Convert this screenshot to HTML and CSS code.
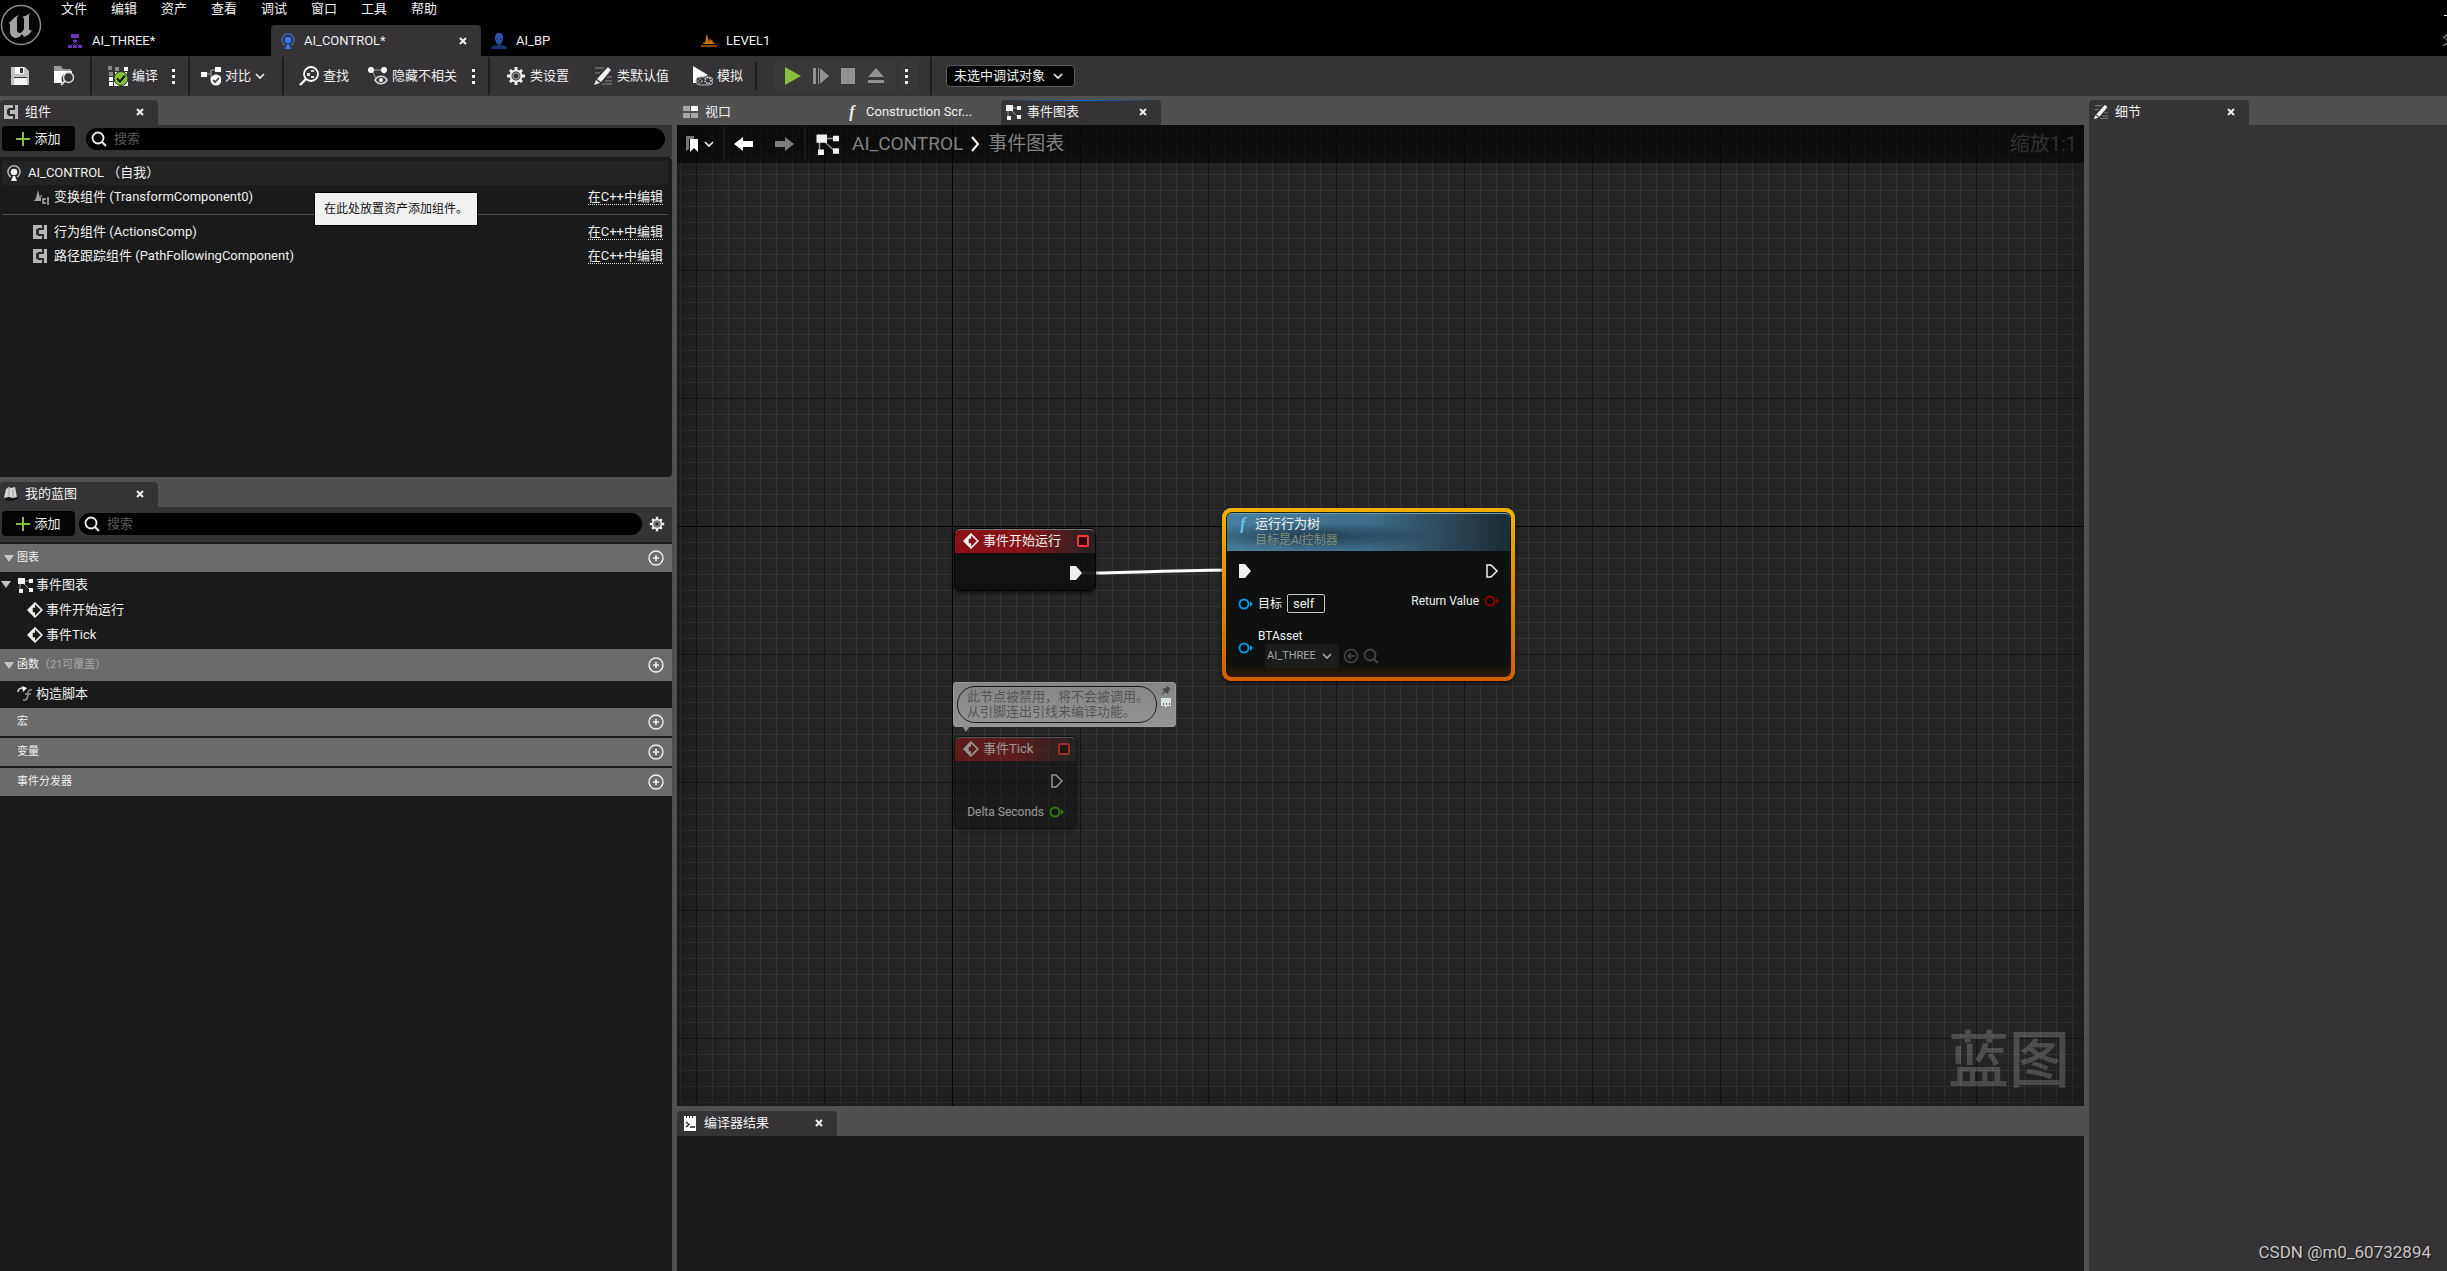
FILE: index.html
```html
<!DOCTYPE html>
<html lang="zh-CN">
<head>
    <meta charset="utf-8">
    <meta name="viewport" content="width=device-width, initial-scale=1.0">
    <title>AI_CONTROL</title>
    <link rel="stylesheet" href="styles.css">
</head>

<body>
    <!-- icon sprite -->
    <svg class="sprite" aria-hidden="true">
        <symbol id="i-close" viewBox="0 0 8 8"><path d="M1 1l6 6M7 1L1 7" stroke="currentColor" stroke-width="2" fill="none"/></symbol>
        <symbol id="i-chevron" viewBox="0 0 10 8"><path d="M1 2l4 4 4-4" stroke="currentColor" stroke-width="1.600" fill="none"/></symbol>
        <symbol id="i-dots" viewBox="0 0 4 16"><path d="M0 1h3v3H0zM0 7h3v3H0zM0 13h3v3H0z" fill="currentColor"/></symbol>
        <symbol id="i-plus" viewBox="0 0 14 14"><path d="M7 0v14M0 7h14" stroke="currentColor" stroke-width="2"/></symbol>
        <symbol id="i-search" viewBox="0 0 16 16"><circle cx="7" cy="7" r="5.500" stroke="currentColor" stroke-width="1.800" fill="none"/><path d="M11 11l4 4" stroke="currentColor" stroke-width="2"/></symbol>
        <symbol id="i-circle-plus" viewBox="0 0 16 16"><circle cx="8" cy="8" r="7" stroke="currentColor" stroke-width="1.4" fill="none"/><path d="M8 5v6M5 8h6" stroke="currentColor" stroke-width="1.6"/></symbol>
        <symbol id="i-gear" viewBox="0 0 20 20">
            <path d="M10 1v4M10 15v4M1 10h4M15 10h4M4 4l2.500 2.500M13.500 13.500L16 16M16 4l-2.500 2.500M6.500 13.500L4 16" stroke="currentColor" stroke-width="3"/>
            <circle cx="10" cy="10" r="5.500" stroke="currentColor" stroke-width="2" fill="none"/>
            <circle cx="10" cy="10" r="3" stroke="#8a8a8a" stroke-width="1.500" fill="none"/>
        </symbol>
        <symbol id="i-graph" viewBox="0 0 16 16">
            <path d="M5 4h8M5 5l8 8M3 6v7" stroke="#9a9a9a" fill="none"/>
            <path d="M1 1h7v6H1zM12 2h4v4h-4zM12 11h4v4h-4zM2 12h4v4H2z" fill="currentColor"/>
        </symbol>
        <symbol id="i-pencil" viewBox="0 0 20 20">
            <path d="M2 2h9M2 7h5M14 11h5M12 15h7M9 18h10" stroke="#8c8c8c" stroke-width="1"/>
            <path d="M15 1l3 3L8 16l-4-3z" fill="currentColor"/><path d="M3 14l4 3-6 2z" fill="currentColor"/>
        </symbol>
        <symbol id="i-comp" viewBox="0 0 14 14">
            <path d="M0 0h14v14H0z" fill="#b8b8b8"/>
            <path d="M11 0H9v3H5L3 5v4l2 2h4v3h2V9H6V5h5z" fill="#2a292b"/>
        </symbol>
        <symbol id="i-controller" viewBox="0 0 14 16">
            <path d="M4 12a6 6 0 1 1 6 0" stroke="currentColor" stroke-width="1.600" fill="none" opacity=".7"/>
            <circle cx="7" cy="7" r="3.300" fill="currentColor"/><path d="M6 11h2l2 5H4z" fill="currentColor"/>
        </symbol>
        <symbol id="i-event" viewBox="0 0 14 14">
            <path d="M7 1l6 6-6 6-6-6z" stroke="currentColor" stroke-width="1.500" fill="none"/>
            <path d="M7 1v4H5v4h2v4L1 7z" fill="currentColor"/>
        </symbol>
        <symbol id="i-tri" viewBox="0 0 10 7"><path d="M0 0h10L5 7z" fill="#c4c4c4"/></symbol>
        <symbol id="i-exec" viewBox="0 0 14 16"><path d="M1 1h6l6 7-6 7H1z" fill="currentColor"/></symbol>
        <symbol id="i-exec-out" viewBox="0 0 14 16"><path d="M2 2h4l6 6-6 6H2z" fill="none" stroke="currentColor" stroke-width="1.500"/></symbol>
        <symbol id="i-pin" viewBox="0 0 15 12"><circle cx="6" cy="6" r="4.500" stroke="currentColor" stroke-width="2" fill="#070b09"/><path d="M12 3l3 3-3 3z" fill="currentColor"/></symbol>
    </svg>

    <header class="titlebar">
        <svg class="logo" viewBox="0 0 42 42" role="img" aria-label="Unreal">
            <circle cx="21" cy="21" r="19.500" fill="#060606" stroke="#8e8e8e" stroke-width="1.500"/>
            <path d="M9 21c2-5 5-8 10-10-1 1-2 2-2 4v11c0 2 1 3 3 3 2-1 3-2 4-4V15c0-1-1-2-2-2 3-1 6-2 8-4-1 2-1 3-1 5v10c0 2 1 3 3 2-2 4-5 6-8 7l-2-3c-2 3-4 4-7 4-3-1-5-3-5-6V18c0-1-1-1-1 3z" fill="#a2a4a2"/>
        </svg>
        <div class="titlebar-main">
            <nav class="menu">
                <button>文件</button>
                <button>编辑</button>
                <button>资产</button>
                <button>查看</button>
                <button>调试</button>
                <button>窗口</button>
                <button>工具</button>
                <button>帮助</button>
            </nav>
            <div class="doc-tabs">
                <div class="doc-tab">
                    <svg width="16" height="16" viewBox="0 0 16 16"><path d="M8 4v10M4 13l4-4 4 4" stroke="#4d2a8a" fill="none"/><path d="M4 1h8v4H4zM6 7h4v2H6zM1 12h4v3H1zM6 12h4v3H6zM11 12h4v3h-4z" fill="#6a35b5"/></svg>
                    <span>AI_THREE*</span>
                </div>
                <div class="doc-tab active">
                    <svg class="blue" width="14" height="16"><use href="#i-controller"/></svg>
                    <span>AI_CONTROL*</span>
                    <button class="close" aria-label="关闭"><svg width="8" height="8"><use href="#i-close"/></svg></button>
                </div>
                <div class="doc-tab">
                    <svg width="16" height="16" viewBox="0 0 16 16"><path d="M0 16c0-3 3-4 8-4s8 1 8 4z" fill="#173268"/><path d="M8 0c3 0 4 2 4 5s-2 7-4 7-4-4-4-7 1-5 4-5z" fill="#2854b0"/><path d="M5 6h2M9 6h2M7 10h2" stroke="#12275a"/></svg>
                    <span>AI_BP</span>
                </div>
                <div class="doc-tab">
                    <svg width="16" height="14" viewBox="0 0 16 14"><path d="M2 10l1-2 1 1 1-6 1-3 2 8 1-4 1 3 1-2 1 4 1-1 1 2z" fill="#c47600"/><path d="M0 11h16v2H0z" fill="#7c4a00"/></svg>
                    <span>LEVEL1</span>
                </div>
            </div>
        </div>
        <!-- window buttons, cut by the right edge of the window -->
        <div class="window-end">
            <span class="minimize"></span>
            <span class="parent-class">父</span>
        </div>
    </header>

    <div class="toolbar">
        <div class="group first">
            <button aria-label="保存"><svg width="20" height="20" viewBox="0 0 20 20"><path d="M1 1h14l4 4v14H1z" fill="#c2c2c2"/><path d="M5 1h9v7H5z" fill="#fff"/><path d="M10 2h3v5h-3z" fill="#353336"/><path d="M4 12h13v7H4z" fill="#f4f4f4"/><path d="M4 11h13v1H4z" fill="#353336"/></svg></button>
            <button aria-label="浏览"><svg width="22" height="20" viewBox="0 0 22 20"><path d="M1 0h7l2 3h8v2H1z" fill="#9a9a9a"/><path d="M1 5h18v4a6 6 0 0 0-9 8H1z" fill="#fff"/><circle cx="15.500" cy="11.500" r="5" stroke="#d8d8d8" stroke-width="1.500" fill="#353336"/><path d="M12 15l-4 4" stroke="#d8d8d8" stroke-width="1.800"/></svg></button>
        </div>
        <div class="group compile">
            <button><svg width="20" height="20" viewBox="0 0 20 20"><path d="M0 0h4v4H0zM7 1h4v4H7zM1 6h4v4H1z" fill="#8a8a8a"/><path d="M16 1h4v4h-4zM7 6h12v6H7zM1 11h4v4H1zM1 16h4v4H1zM6 15h14v5H6z" fill="#fff"/><circle cx="13" cy="12.500" r="7" fill="#86bf3c" stroke="#26301a"/><path d="M9 12.500l3 3 5-6" stroke="#111" stroke-width="2" fill="none"/></svg>编译</button>
            <button aria-label="编译选项"><svg width="4" height="16"><use href="#i-dots"/></svg></button>
        </div>
        <div class="group diff">
            <button><svg width="20" height="20" viewBox="0 0 20 20"><path d="M5 8h5V4h5M10 8v6" stroke="#a8a8a8" fill="none"/><path d="M0 6h6v5H0zM14 1h6v5h-6z" fill="#fff"/><circle cx="15" cy="14" r="5.500" fill="#fff"/><path d="M12 14l2 2 4-4" stroke="#353336" stroke-width="1.600" fill="none"/></svg>对比<svg width="10" height="8"><use href="#i-chevron"/></svg></button>
        </div>
        <div class="group find">
            <button><svg width="20" height="20" viewBox="0 0 20 20"><circle cx="12" cy="8" r="7" stroke="#fff" stroke-width="1.800" fill="none"/><path d="M7 13l-6 6" stroke="#fff" stroke-width="2.400"/><path d="M8 7h3v3H8zM12 4h3v2h-3zM12 10h3v2h-3z" fill="#ddd"/></svg>查找</button>
            <button><svg width="20" height="20" viewBox="0 0 20 20"><path d="M4 4h12M4 4l4 9M16 4v4" stroke="#aaa" fill="none"/><circle cx="3" cy="4" r="3" fill="#fff"/><circle cx="16" cy="4" r="3" fill="#fff"/><path d="M7 14c3-5 9-5 12 0-3 5-9 5-12 0z" fill="none" stroke="#ddd" stroke-width="1.500"/><circle cx="13" cy="14" r="2" fill="#fff"/></svg>隐藏不相关</button>
            <button aria-label="隐藏选项"><svg width="4" height="16"><use href="#i-dots"/></svg></button>
        </div>
        <div class="group settings">
            <button><svg width="20" height="20"><use href="#i-gear"/></svg>类设置</button>
            <button><svg width="20" height="20"><use href="#i-pencil"/></svg>类默认值</button>
            <button><svg width="20" height="20" viewBox="0 0 20 20"><path d="M0 0l15 9-7 3-3 5H0z" fill="#fff"/><rect x="3" y="11" width="17" height="8" rx="4" fill="#353336" stroke="#b0b0b0"/><circle cx="7" cy="15" r="2" fill="none" stroke="#ddd" stroke-dasharray="1.500 1"/><circle cx="15" cy="14.500" r="3" fill="none" stroke="#ddd" stroke-width="1.500" stroke-dasharray="1.500 1"/></svg>模拟</button>
        </div>
        <div class="group play">
            <div class="play-box">
                <button aria-label="播放"><svg width="16" height="18" viewBox="0 0 16 18"><path d="M0 0l16 9-16 9z" fill="#86bf3c"/></svg></button>
                <button aria-label="步进"><svg width="16" height="18" viewBox="0 0 16 18"><path d="M0 1h3v16H0zM5 1h1v16H5zM7 1l9 8-9 8z" fill="#919191"/></svg></button>
                <button aria-label="停止"><svg width="14" height="16" viewBox="0 0 14 16"><path d="M0 0h14v16H0z" fill="#919191"/></svg></button>
                <button aria-label="弹出"><svg width="18" height="16" viewBox="0 0 18 16"><path d="M9 0l8 9H1zM1 12h16v3H1z" fill="#919191"/></svg></button>
                <button aria-label="播放选项" class="play-more"><svg width="4" height="16"><use href="#i-dots"/></svg></button>
            </div>
        </div>
        <div class="select-wrap debug">
            <select aria-label="调试对象"><option>未选中调试对象</option></select>
            <svg width="10" height="8"><use href="#i-chevron"/></svg>
        </div>
    </div>

    <main class="workspace">
        <div class="column left">
            <section class="panel components">
                <div class="panel-tabs">
                    <div class="panel-tab active"><svg width="14" height="14"><use href="#i-comp"/></svg><span>组件</span><button class="close" aria-label="关闭"><svg width="8" height="8"><use href="#i-close"/></svg></button></div>
                </div>
                <div class="panel-tools">
                    <button class="add"><svg width="14" height="14"><use href="#i-plus"/></svg>添加</button>
                    <label class="search"><svg width="16" height="16"><use href="#i-search"/></svg><input type="text" placeholder="搜索" aria-label="搜索组件"></label>
                </div>
                <div class="tree">
                    <div class="tree-row root"><svg width="14" height="16"><use href="#i-controller"/></svg><span>AI_CONTROL （自我）</span></div>
                    <div class="tree-row child">
                        <svg width="16" height="16" viewBox="0 0 16 16"><path d="M0 12l2-1 1-2 2-8 2 8 1-4 2 5v2z" fill="#a0a0a0"/><path d="M8 8h8v8H8z" fill="#1a1a1a"/><path d="M13 10h-3v4h3M15 8v8" stroke="#b4b4b4" stroke-width="1.500" fill="none"/></svg>
                        <span>变换组件 (TransformComponent0)</span><a href="#">在C++中编辑</a>
                    </div>
                    <hr>
                    <div class="tree-row child"><svg width="14" height="14"><use href="#i-comp"/></svg><span>行为组件 (ActionsComp)</span><a href="#">在C++中编辑</a></div>
                    <div class="tree-row child"><svg width="14" height="14"><use href="#i-comp"/></svg><span>路径跟踪组件 (PathFollowingComponent)</span><a href="#">在C++中编辑</a></div>
                </div>
                <div class="tooltip" role="tooltip">在此处放置资产添加组件。</div>
            </section>

            <section class="panel blueprint">
                <div class="panel-tabs">
                    <div class="panel-tab active"><svg width="14" height="14" viewBox="0 0 14 14"><path d="M0 10l3-1 8 1 3-1v3l-5 2H2z" fill="#151515"/><path d="M0 11L2 2l3-2 2 1 4-1 2 10-4 1-4-1z" fill="#d6d6d6"/><path d="M5 1v9M9 2v8" stroke="#999"/></svg><span>我的蓝图</span><button class="close" aria-label="关闭"><svg width="8" height="8"><use href="#i-close"/></svg></button></div>
                </div>
                <div class="panel-tools compact">
                    <button class="add"><svg width="14" height="14"><use href="#i-plus"/></svg>添加</button>
                    <label class="search"><svg width="16" height="16"><use href="#i-search"/></svg><input type="text" placeholder="搜索" aria-label="搜索蓝图"></label>
                    <button aria-label="设置"><svg width="16" height="16"><use href="#i-gear"/></svg></button>
                </div>
                <div class="sections">
                    <div class="section-head"><svg width="10" height="7"><use href="#i-tri"/></svg><span>图表</span><button aria-label="添加图表"><svg width="16" height="16"><use href="#i-circle-plus"/></svg></button></div>
                    <div class="section-body">
                        <div class="item open"><svg width="10" height="7"><use href="#i-tri"/></svg><svg width="16" height="16"><use href="#i-graph"/></svg>事件图表</div>
                        <div class="item nested"><svg width="16" height="16"><use href="#i-event"/></svg>事件开始运行</div>
                        <div class="item nested"><svg width="16" height="16"><use href="#i-event"/></svg>事件Tick</div>
                    </div>
                    <div class="section-head tall"><svg width="10" height="7"><use href="#i-tri"/></svg><span>函数<em>（21可覆盖）</em></span><button aria-label="添加函数"><svg width="16" height="16"><use href="#i-circle-plus"/></svg></button></div>
                    <div class="section-body">
                        <div class="item script"><svg width="16" height="16" viewBox="0 0 16 16"><path d="M1 6c0-3 2-4 5-4" stroke="#ddd" stroke-width="1.500" fill="none"/><path d="M5 0l5 2-4 4z" fill="#fff"/><path d="M15 4c-3-1-4 1-4 4s-1 7-5 6M8 8h6" stroke="#8f8f8f" stroke-width="1.500" fill="none"/></svg>构造脚本</div>
                    </div>
                    <div class="section-head"><span>宏</span><button aria-label="添加宏"><svg width="16" height="16"><use href="#i-circle-plus"/></svg></button></div>
                    <div class="section-head spaced"><span>变量</span><button aria-label="添加变量"><svg width="16" height="16"><use href="#i-circle-plus"/></svg></button></div>
                    <div class="section-head spaced"><span>事件分发器</span><button aria-label="添加事件分发器"><svg width="16" height="16"><use href="#i-circle-plus"/></svg></button></div>
                </div>
            </section>
        </div>

        <div class="column center">
            <section class="panel graph-panel">
                <div class="panel-tabs graph-tabs">
                    <div class="panel-tab"><svg width="16" height="12" viewBox="0 0 16 12"><path d="M0 0h7v5H0zM0 7h7v5H0zM8 7h7v5H8z" fill="#a8a8a8"/><path d="M8 0h7v5H8z" fill="#fff"/></svg><span>视口</span></div>
                    <div class="panel-tab"><span class="fn">f</span><span>Construction Scr...</span></div>
                    <div class="panel-tab active current"><svg width="16" height="16"><use href="#i-graph"/></svg><span>事件图表</span><button class="close" aria-label="关闭"><svg width="8" height="8"><use href="#i-close"/></svg></button></div>
                </div>
                <div class="graph">
                    <div class="graph-title">
                        <button aria-label="书签" class="bookmark"><svg width="13" height="18" viewBox="0 0 13 18"><path d="M1 1h8v3H4v10l-3 2z" fill="#777"/><path d="M5 4h8v13l-4-4-4 4z" fill="#fff"/></svg><svg width="10" height="8"><use href="#i-chevron"/></svg></button>
                        <div class="history">
                            <button aria-label="后退"><svg width="20" height="16" viewBox="0 0 20 16"><path d="M0 8l9-7v4h10v6H9v4z" fill="#fff"/></svg></button>
                            <button aria-label="前进"><svg width="20" height="16" viewBox="0 0 20 16"><path d="M20 8l-9-7v4H1v6h10v4z" fill="#7c7c7c"/></svg></button>
                        </div>
                        <svg width="24" height="22" viewBox="0 0 16 16" preserveAspectRatio="none"><use href="#i-graph"/></svg>
                        <div class="crumbs"><span>AI_CONTROL</span><svg width="9" height="16" viewBox="0 0 9 16"><path d="M1 1l6 7-6 7" stroke="#fff" stroke-width="2" fill="none"/></svg><span>事件图表</span></div>
                        <div class="zoom-level">缩放1:1</div>
                    </div>

                    <svg class="wire" width="160" height="12" viewBox="0 0 160 12"><path d="M0 8C50 8 90 5 157 5" stroke="#fff" stroke-width="3" fill="none"/></svg>

                    <article class="node begin-play">
                        <div class="node-head"><svg width="16" height="16"><use href="#i-event"/></svg><span>事件开始运行</span><i class="delegate"></i></div>
                        <div class="pin-row out"><svg width="14" height="16"><use href="#i-exec"/></svg></div>
                    </article>

                    <article class="node run-tree">
                        <div class="node-inner">
                            <div class="node-head"><span class="fn">f</span><div><div>运行行为树</div><div class="subtitle">目标是<em>AI</em>控制器</div></div></div>
                            <div class="pins">
                                <div class="inputs">
                                    <div class="pin-row exec"><svg width="14" height="16"><use href="#i-exec"/></svg></div>
                                    <div class="pin-row target"><svg class="object" width="15" height="12"><use href="#i-pin"/></svg><label for="target">目标</label><input id="target" type="text" value="self"></div>
                                    <div class="pin-row asset">
                                        <svg class="object" width="15" height="12"><use href="#i-pin"/></svg>
                                        <div>
                                            <label for="btasset">BTAsset</label>
                                            <div class="asset-tools">
                                                <div class="select-wrap"><select id="btasset"><option>AI_THREE</option></select><svg width="10" height="8"><use href="#i-chevron"/></svg></div>
                                                <button aria-label="使用所选资产"><svg width="16" height="16" viewBox="0 0 16 16"><circle cx="8" cy="8" r="6.500" stroke="currentColor" stroke-width="1.500" fill="none"/><path d="M12 8H5M8 5L5 8l3 3" stroke="currentColor" stroke-width="1.500" fill="none"/></svg></button>
                                                <button aria-label="浏览资产"><svg width="16" height="16"><use href="#i-search"/></svg></button>
                                            </div>
                                        </div>
                                    </div>
                                </div>
                                <div class="outputs">
                                    <div class="pin-row exec"><svg width="14" height="16"><use href="#i-exec-out"/></svg></div>
                                    <div class="pin-row result">Return Value<svg class="bool" width="15" height="12"><use href="#i-pin"/></svg></div>
                                </div>
                            </div>
                        </div>
                    </article>

                    <aside class="bubble">
                        <p>此节点被禁用，将不会被调用。<br>从引脚连出引线来编译功能。</p>
                        <div class="bubble-tools">
                            <svg width="12" height="10" viewBox="0 0 12 10"><path d="M7 0l4 3-2 1-1 4-3-2-4 4 3-5-2-2 4-1z" fill="#484848"/></svg>
                            <svg width="12" height="10" viewBox="0 0 12 10"><path d="M1 0h10v8H7l-2 2V8H1z" fill="#d9e0e4"/><path d="M3 5h1v2H3zM6 5h1v2H6zM9 5h1v2H9z" fill="#51606a"/></svg>
                        </div>
                    </aside>

                    <article class="node tick">
                        <div class="node-head"><svg width="16" height="16"><use href="#i-event"/></svg><span>事件Tick</span><i class="delegate"></i></div>
                        <div class="pin-row out"><svg width="14" height="16"><use href="#i-exec-out"/></svg></div>
                        <div class="pin-row delta">Delta Seconds<svg class="float" width="15" height="12"><use href="#i-pin"/></svg></div>
                    </article>

                    <div class="graph-type">蓝图</div>
                </div>
            </section>

            <section class="panel results">
                <div class="panel-tabs">
                    <div class="panel-tab active"><svg width="12" height="16" viewBox="0 0 12 16"><path d="M0 1h2v2h1V1h2v2h1V1h2v2h1V1h3v15H0z" fill="#fff"/><path d="M2 7l3 2.500L2 12M6 12h5" stroke="#222" stroke-width="1.500" fill="none"/></svg><span>编译器结果</span><button class="close" aria-label="关闭"><svg width="8" height="8"><use href="#i-close"/></svg></button></div>
                </div>
                <div class="results-body"></div>
            </section>
        </div>

        <div class="column right">
            <section class="panel details">
                <div class="panel-tabs">
                    <div class="panel-tab active"><svg width="16" height="16"><use href="#i-pencil"/></svg><span>细节</span><button class="close" aria-label="关闭"><svg width="8" height="8"><use href="#i-close"/></svg></button></div>
                </div>
                <div class="details-body"><p class="credit">CSDN @m0_60732894</p></div>
            </section>
        </div>
    </main>
</body>

</html>
```
FILE: styles.css
```css
* {
    box-sizing: border-box;
}

body {
    margin: 0;
    height: 100vh;
    display: flex;
    flex-direction: column;
    overflow: hidden;
    background: #505050;
    color: #f0f0f0;
    font-family: Roboto, "Noto Sans CJK SC", sans-serif;
    font-size: 13px;
    line-height: 16px;
}

svg {
    display: block;
    flex: none;
}

button,
input,
select {
    font: inherit;
    color: inherit;
    background: none;
    border: 0;
    padding: 0;
    margin: 0;
    outline: none;
}

button {
    display: flex;
    align-items: center;
    gap: 4px;
    white-space: nowrap;
}

.sprite {
    position: absolute;
    width: 0;
    height: 0;
}

.fn {
    width: 16px;
    font-family: "Liberation Serif", serif;
    font-style: italic;
    font-weight: bold;
    font-size: 16px;
    text-align: center;
}

/* title bar */
.titlebar {
    height: 56px;
    display: flex;
    background: #000;
}

.logo {
    width: 42px;
    height: 42px;
    margin-top: 4px;
}

.titlebar-main {
    flex: 1;
    display: flex;
    flex-direction: column;
    justify-content: space-between;
}

.menu {
    display: flex;
    gap: 24px;
    padding: 1px 0 0 19px;
}

.doc-tabs {
    display: flex;
    padding-left: 19px;
}

.doc-tab {
    width: 210px;
    height: 31px;
    display: flex;
    align-items: center;
    gap: 9px;
    padding: 0 14px 0 10px;
    border-radius: 4px 4px 0 0;
}

.doc-tab:first-child {
    padding-left: 6px;
}

.doc-tab.active {
    background: #353336;
}

.blue {
    color: #3a78f0;
}

.close {
    margin-left: auto;
}

.window-end {
    width: 5px;
    overflow: hidden;
    display: flex;
    flex-direction: column;
    gap: 16px;
    padding-top: 15px;
}

.minimize {
    width: 3px;
    height: 1px;
    margin-left: 2px;
    background: #fff;
}

.parent-class {
    width: 13px;
    color: #8f8f8f;
}

/* toolbar */
.toolbar {
    height: 40px;
    display: flex;
    align-items: center;
    background: #353336;
}

.group {
    height: 38px;
    display: flex;
    align-items: center;
    gap: 24px;
    padding: 0 12px 0 16px;
    border-right: 2px solid #1c1c1c;
}

.group.first {
    padding: 0 15px 0 10px;
    gap: 23px;
}

.group.compile {
    gap: 14px;
}

.group.diff {
    padding: 0 17px 0 11px;
}

.group.find {
    gap: 19px;
    padding-left: 15px;
}

.group.find button:last-child {
    margin-left: -4px;
}

.group.settings {
    height: 28px;
}

.group.play {
    padding: 0 13px 0 17px;
}

.play-box {
    height: 28px;
    display: flex;
    align-items: center;
    gap: 12px;
    padding: 0 8px 0 11px;
    border-radius: 4px;
    background: #383838;
}

.play-more {
    height: 28px;
    padding-left: 7px;
    border-left: 1px solid #2f2f2f;
}

.select-wrap {
    position: relative;
    display: flex;
    align-items: center;
}

.select-wrap select {
    appearance: none;
}

.select-wrap svg {
    position: absolute;
    right: 12px;
    pointer-events: none;
}

.debug {
    margin-left: 14px;
}

.debug select {
    height: 22px;
    padding: 0 28px 0 7px;
    border: 1px solid #5a5a5a;
    border-radius: 4px;
    background: #050505;
}

/* docking layout */
.workspace {
    flex: 1;
    min-height: 0;
    display: grid;
    grid-template-columns: minmax(0, 672fr) minmax(0, 1407fr) minmax(0, 358fr);
    gap: 5px;
}

.column {
    display: flex;
    flex-direction: column;
    gap: 1px;
    min-height: 0;
}

.panel {
    flex: 1 1 0;
    min-height: 0;
    display: flex;
    flex-direction: column;
}

.components {
    position: relative;
    flex-grow: 381;
}

.blueprint {
    flex-grow: 793;
}

.graph-panel {
    flex-grow: 1010;
}

.results {
    flex-grow: 164;
}

.panel-tabs {
    flex: none;
    height: 29px;
    display: flex;
    gap: 1px;
    padding-top: 4px;
}

.panel-tab {
    width: 160px;
    display: flex;
    align-items: center;
    gap: 6px;
    padding: 0 14px 2px 4px;
    border-radius: 4px 4px 0 0;
    white-space: nowrap;
}

.panel-tab.active {
    background: #353336;
}

.left .panel-tab {
    width: 158px;
    gap: 7px;
}

.graph-tabs {
    padding-left: 2px;
}

.panel-tab.current {
    background: linear-gradient(90deg, #353336, #0a6cdc 50%, #353336) top / 100% 1px no-repeat #353336;
}

.panel-tools {
    flex: none;
    height: 32px;
    display: flex;
    align-items: flex-start;
    gap: 11px;
    padding: 1px 7px 0 2px;
    background: #353336;
}

.panel-tools.compact {
    height: 37px;
    align-items: center;
    gap: 4px;
    padding-bottom: 3px;
    border-bottom: 2px solid #1a1a1a;
}

.add {
    width: 73px;
    height: 25px;
    justify-content: center;
    border-radius: 4px;
    background: #040404;
}

.add svg {
    color: #86bf3c;
}

.search {
    flex: 1;
    height: 22px;
    margin-top: 2px;
    display: flex;
    align-items: center;
    gap: 7px;
    padding-left: 5px;
    border-radius: 11px;
    background: #000;
}

.compact .search {
    margin: 0 3px 0 0;
}

.search input {
    flex: 1;
}

.search input::placeholder {
    color: #5a5a5a;
}

/* component tree */
.tree {
    flex: 1;
    padding: 4px 4px 0 2px;
    border-radius: 0 4px 4px 0;
    background: #1a1a1a;
}

.tree-row {
    height: 24px;
    display: flex;
    align-items: center;
    gap: 7px;
    padding-right: 5px;
}

.tree-row.root {
    padding-left: 5px;
    background: #232323;
}

.tree-row.child {
    padding-left: 31px;
}

.tree-row svg + span {
    flex: 1;
}

.tree-row svg[width="16"] {
    margin-right: -2px;
}

.tree-row a {
    color: inherit;
    text-decoration: none;
    border-bottom: 1px dotted #e0e0e0;
    line-height: 14px;
}

.tree hr {
    height: 1px;
    margin: 5px 0;
    border: 0;
    background: #505050;
}

.tooltip {
    position: absolute;
    left: 314px;
    top: 96px;
    padding: 8px 9px;
    border: 1px solid #000;
    background: #f0f0f0;
    color: #101010;
    font-size: 12px;
}

/* my blueprint */
.sections {
    flex: 1;
    background: #1a1a1a;
}

.section-head {
    height: 28px;
    display: flex;
    align-items: center;
    gap: 4px;
    padding: 0 8px 0 17px;
    background: #6b6b6b;
    font-size: 11px;
}

.section-head > svg {
    margin-left: -13px;
    margin-right: -1px;
}

.section-head.tall {
    height: 32px;
}

.section-head.spaced {
    margin-top: 2px;
}

.section-head em {
    color: #a8a8a8;
    font-style: normal;
}

.section-head button {
    margin-left: auto;
}

.section-body {
    padding-bottom: 2px;
}

.item {
    height: 25px;
    display: flex;
    align-items: center;
    gap: 3px;
    padding-left: 17px;
}

.item.open {
    padding-left: 1px;
}

.item.open svg + svg {
    margin-left: 3px;
}

.item.nested {
    padding-left: 27px;
}

/* graph */
.graph {
    flex: 1;
    position: relative;
    overflow: hidden;
    background:
        linear-gradient(#000, #000) 275px 0 / 1px 100% no-repeat,
        linear-gradient(#000, #000) 0 401px / 100% 1px no-repeat,
        linear-gradient(90deg, #161616 1px, transparent 1px) 19px 0 / 128px 128px,
        linear-gradient(#161616 1px, transparent 1px) 0 17px / 128px 128px,
        linear-gradient(90deg, #353535 1px, transparent 1px) 3px 0 / 16px 16px,
        linear-gradient(#353535 1px, transparent 1px) 0 1px / 16px 16px,
        #262626;
    box-shadow: inset 0 0 60px rgba(0, 0, 0, 0.5);
}

.graph-title {
    position: relative;
    height: 38px;
    display: flex;
    align-items: center;
    gap: 9px;
    padding: 0 7px 0 8px;
    background: rgba(0, 0, 0, 0.6);
}

.bookmark {
    gap: 6px;
}

.history {
    height: 34px;
    display: flex;
    align-items: center;
    gap: 20px;
    padding: 0 10px 0 9px;
    border: solid #1a1a1a;
    border-width: 0 2px;
}

.crumbs {
    display: flex;
    align-items: center;
    gap: 8px;
    margin-left: 4px;
    color: #828282;
    font-size: 19px;
    line-height: 24px;
}

.zoom-level {
    margin-left: auto;
    color: #303030;
    font-size: 20px;
    line-height: 24px;
}

.graph-type {
    position: absolute;
    right: 14px;
    bottom: 9px;
    color: rgba(255, 255, 255, 0.19);
    font-size: 61px;
    font-weight: 500;
    line-height: 72px;
}

.wire {
    position: absolute;
    left: 405px;
    top: 440px;
}

.node {
    position: absolute;
    border: 1px solid #050505;
    border-radius: 6px;
    background: rgba(13, 16, 14, 0.92);
    box-shadow: 0 2px 5px rgba(0, 0, 0, 0.6);
}

.node-head {
    height: 24px;
    display: flex;
    align-items: center;
    gap: 4px;
    padding: 0 6px 2px 8px;
    border-top: 1px solid #777;
    border-radius: 5px 5px 0 0;
    background: linear-gradient(90deg, #8c1013, #861418 50%, #2a2222 95%);
}

.delegate {
    width: 12px;
    height: 12px;
    margin-left: auto;
    border: 2px solid #f33;
    border-radius: 2px;
    background: #2a0505;
}

.pin-row {
    display: flex;
    align-items: center;
    gap: 5px;
    font-size: 12px;
}

.pin-row.out {
    justify-content: flex-end;
    padding: 12px 12px 0 0;
}

.begin-play {
    left: 277px;
    top: 403px;
    width: 142px;
    height: 63px;
}

.tick {
    left: 277px;
    top: 611px;
    width: 123px;
    height: 93px;
    opacity: 0.55;
}

.delta {
    justify-content: flex-end;
    padding: 15px 12px 0 0;
}

/* selected node: the border is a vertical gradient */
.run-tree {
    left: 545px;
    top: 383px;
    width: 293px;
    padding: 4px;
    border: 0;
    border-radius: 9px;
    background: linear-gradient(#f2b200, #d06000);
}

.node-inner {
    height: 165px;
    padding: 1px;
    border-radius: 6px;
    background: linear-gradient(#16231f, #0e110f 20%, #0e110f 92%, #2e1b06);
}

.run-tree .node-head {
    height: 38px;
    align-items: flex-start;
    gap: 4px;
    padding: 2px 8px;
    border-top: 1px solid #6fa3bd;
    background:
        radial-gradient(ellipse at 30% 60%, rgba(15, 35, 50, 0.7), transparent 45%),
        linear-gradient(90deg, #4a7d9d, #3e6d8b 50%, #1e2e36 97%);
}

.run-tree .fn {
    color: #6cc0f0;
}

.subtitle {
    color: #82917a;
    font-size: 12px;
}

.pins {
    display: flex;
    justify-content: space-between;
    padding: 12px 11px 0 11px;
}

.exec {
    justify-content: flex-end;
}

.inputs .exec {
    justify-content: flex-start;
}

.target {
    margin-top: 15px;
}

.target input {
    width: 38px;
    height: 19px;
    padding-left: 5px;
    border: 1px solid #c8c8c8;
    border-radius: 2px;
    font-size: 13px;
}

.asset {
    margin-top: 15px;
}

.result {
    margin-top: 14px;
}

.asset-tools {
    display: flex;
    align-items: center;
    gap: 4px;
    margin-left: 7px;
    color: #444;
}

.asset-tools .select-wrap {
    color: #a8a8a8;
}

.asset-tools .select-wrap svg {
    right: 7px;
}

.asset-tools select {
    width: 74px;
    height: 24px;
    padding-left: 2px;
    border-radius: 3px;
    background: #1a1d1b;
    font-size: 11px;
}

.object {
    color: #0a96e0;
}

.bool {
    color: #8c0000;
}

.float {
    color: #3cb800;
}

.bubble {
    position: absolute;
    left: 276px;
    top: 557px;
    display: flex;
    gap: 3px;
    padding: 3px;
    border: 1px solid #999;
    border-radius: 3px;
    background: linear-gradient(#858585, #949494);
}

.bubble::after {
    content: "";
    position: absolute;
    left: 8px;
    top: 100%;
    border: 4px solid transparent;
    border-top: 6px solid #8c8c8c;
}

.bubble p {
    width: 200px;
    margin: 0;
    padding: 2px 0 3px 9px;
    border: 1px solid #1c1c1c;
    border-radius: 18px;
    color: #555;
    line-height: 15px;
    white-space: nowrap;
}

.bubble-tools {
    display: flex;
    flex-direction: column;
    gap: 2px;
}

/* bottom and right panels */
.results-body {
    flex: 1;
    background: #1a1a1a;
}

.results .panel-tab {
    gap: 8px;
    padding-left: 7px;
}

.details-body {
    flex: 1;
    display: flex;
    align-items: flex-end;
    justify-content: flex-end;
    padding: 0 16px 8px;
    background: #353336;
}

.credit {
    margin: 0;
    color: #c8c8c8;
    font-size: 17px;
    line-height: 22px;
    text-shadow: 1px 1px 1px #111;
}
```
